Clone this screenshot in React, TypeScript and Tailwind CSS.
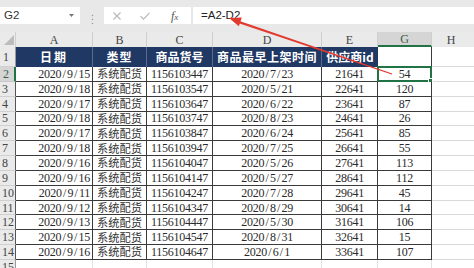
import React from "react";

const rows: string[][] = [
  ["2020/9/15", "1156103447", "2020/7/23", "21641", "54"],
  ["2020/9/18", "1156103547", "2020/5/21", "22641", "120"],
  ["2020/9/17", "1156103647", "2020/6/22", "23641", "87"],
  ["2020/9/18", "1156103747", "2020/8/23", "24641", "26"],
  ["2020/9/17", "1156103847", "2020/6/24", "25641", "85"],
  ["2020/9/18", "1156103947", "2020/7/25", "26641", "55"],
  ["2020/9/16", "1156104047", "2020/5/26", "27641", "113"],
  ["2020/9/16", "1156104147", "2020/5/27", "28641", "112"],
  ["2020/9/11", "1156104247", "2020/7/28", "29641", "45"],
  ["2020/9/12", "1156104347", "2020/8/29", "30641", "14"],
  ["2020/9/13", "1156104447", "2020/5/30", "31641", "106"],
  ["2020/9/15", "1156104547", "2020/8/31", "32641", "15"],
  ["2020/9/16", "1156104647", "2020/6/1", "33641", "107"],
];

function DateText({ v }: { v: string }) {
  const parts = v.split("/");
  return (
    <span>
      {parts.map((p, i) => (
        <React.Fragment key={i}>
          {i > 0 && <span className="inline-block w-[5.75px] text-center">/</span>}
          {p}
        </React.Fragment>
      ))}
    </span>
  );
}

export default function App() {
  return (
    <div className="relative w-[474px] h-[268px] overflow-hidden bg-white font-['Liberation_Serif','Noto_Sans_CJK_SC',serif] text-[#2a2a2a]">
      {/* formula bar */}
      <div className="flex h-[32px] bg-[#e8e8e8] pt-[7px]">
        <div className="flex h-[17px] w-[80px] items-center bg-white pl-[4px] font-['Liberation_Sans',sans-serif] text-[11.5px] text-[#333]">
          <span>G2</span>
          <svg className="ml-auto mr-[6px]" width="5" height="3" viewBox="0 0 5 3">
            <path d="M0 0H5L2.5 3Z" fill="#777" />
          </svg>
        </div>
        <div className="flex w-[24px] items-center justify-center">
          <svg width="3" height="11" viewBox="0 0 3 11">
            <circle cx="1.5" cy="1.5" r="0.8" fill="#a0a0a0" />
            <circle cx="1.5" cy="5.5" r="0.8" fill="#a0a0a0" />
            <circle cx="1.5" cy="9.5" r="0.8" fill="#a0a0a0" />
          </svg>
        </div>
        <div className="flex h-[17px] w-[87px] items-center bg-white">
          <svg className="ml-[9px]" width="8" height="8" viewBox="0 0 8 8">
            <path d="M0.5 0.5L7.5 7.5M7.5 0.5L0.5 7.5" stroke="#b8b8b8" strokeWidth="1.1" />
          </svg>
          <svg className="ml-[19px]" width="10" height="8" viewBox="0 0 10 8">
            <path d="M0.5 4.2L3.5 7.2L9.5 0.8" stroke="#b8b8b8" strokeWidth="1.1" fill="none" />
          </svg>
          <span className="ml-[21px] font-['Liberation_Serif',serif] italic text-[12px] leading-none text-[#555]">
            f<span className="text-[9px]">x</span>
          </span>
        </div>
        <div className="ml-[2px] flex h-[17px] flex-1 items-center bg-white pl-[8px] font-['Liberation_Sans',sans-serif] text-[11.5px] text-[#222]">
          =A2-D2
        </div>
      </div>

      {/* column headers */}
      <div className="flex h-[15px] bg-[#eaeaea] text-[12px] leading-none text-[#444]">
        <div className="relative w-[16px] shrink-0 border-r border-[#cfcfcf]">
          <svg className="absolute left-[4px] top-[3px]" width="10" height="10" viewBox="0 0 10 10">
            <path d="M10 0V10H0Z" fill="#bcbcbc" />
          </svg>
        </div>
        <div className="flex w-[77px] shrink-0 items-center justify-center border-r border-[#cfcfcf]">A</div>
        <div className="flex w-[54px] shrink-0 items-center justify-center border-r border-[#cfcfcf]">B</div>
        <div className="flex w-[66px] shrink-0 items-center justify-center border-r border-[#cfcfcf]">C</div>
        <div className="flex w-[109px] shrink-0 items-center justify-center border-r border-[#cfcfcf]">D</div>
        <div className="flex w-[56px] shrink-0 items-center justify-center border-r border-[#cfcfcf]">E</div>
        <div className="flex w-[54px] shrink-0 items-center justify-center border-r border-b-2 border-r-[#cfcfcf] border-b-[#217346] bg-[#d5d5d5] text-[#3e5f49]">G</div>
        <div className="flex flex-1 items-center justify-center pr-[4px]">H</div>
      </div>

      {/* row 1 */}
      <div className="flex h-[20px] text-[12px] font-bold leading-none text-white">
        <div className="flex w-[16px] shrink-0 items-center border-r border-b border-r-[#9a9a9a] border-b-[#d0d0d0] bg-[#eaeaea] pl-[3px] font-normal text-[#444]">1</div>
        <div className="flex w-[77px] shrink-0 items-center justify-center border-r border-[#5a6a8c] bg-[#1f3864] font-['Noto_Sans_CJK_SC',sans-serif] tracking-[2px]">日期</div>
        <div className="flex w-[54px] shrink-0 items-center justify-center border-r border-[#5a6a8c] bg-[#1f3864] font-['Noto_Sans_CJK_SC',sans-serif] tracking-[1px]">类型</div>
        <div className="flex w-[66px] shrink-0 items-center justify-center border-r border-[#5a6a8c] bg-[#1f3864] font-['Noto_Sans_CJK_SC',sans-serif]">商品货号</div>
        <div className="flex w-[109px] shrink-0 items-center justify-center whitespace-nowrap border-r border-[#5a6a8c] bg-[#1f3864] font-['Noto_Sans_CJK_SC',sans-serif] tracking-[0.5px]">商品最早上架时间</div>
        <div className="flex w-[56px] shrink-0 items-center justify-center whitespace-nowrap bg-[#1f3864] font-['Noto_Sans_CJK_SC',sans-serif]">供应商id</div>
        <div className="w-[54px] shrink-0 border-r border-[#3a3a3a] bg-white"></div>
        <div className="flex-1 border-b border-[#dadada]"></div>
      </div>

      {/* data rows */}
      {rows.map((r, i) => (
        <div key={i} className="flex h-[14.85px] text-[12px] leading-none">
          <div
            className={
              i === 0
                ? "flex w-[16px] shrink-0 items-center border-r-2 border-b border-r-[#217346] border-b-[#c8c8c8] bg-[#d5d5d5] pl-[3px] text-[#3e5f49]"
                : "flex w-[16px] shrink-0 items-center border-r border-b border-r-[#555] border-b-[#d0d0d0] bg-[#eaeaea] pl-[2px] text-[#444]"
            }
          >
            {i + 2}
          </div>
          <div className="flex w-[77px] shrink-0 items-center justify-end border-r border-b border-[#3a3a3a] pr-[2px] tracking-[-0.25px]">
            <DateText v={r[0]} />
          </div>
          <div className="flex w-[54px] shrink-0 items-center justify-center border-r border-b border-[#3a3a3a] font-['Noto_Sans_CJK_SC',sans-serif] text-[11.25px] text-[#333]">
            系统配货
          </div>
          <div className="flex w-[66px] shrink-0 items-center justify-center border-r border-b border-[#3a3a3a] tracking-[-0.25px]">
            {r[1]}
          </div>
          <div className="flex w-[109px] shrink-0 items-center justify-center border-r border-b border-[#3a3a3a] tracking-[-0.25px]">
            <DateText v={r[2]} />
          </div>
          <div className="flex w-[56px] shrink-0 items-center justify-center border-r border-b border-[#3a3a3a] tracking-[-0.25px]">
            {r[3]}
          </div>
          <div className="relative flex w-[54px] shrink-0 items-center justify-center border-r border-b border-[#3a3a3a] tracking-[-0.25px]">
            {r[4]}
            {i === 0 && (
              <div className="absolute -left-[1px] -top-[1px] -right-[1px] -bottom-[1px] border-2 border-[#217346]">
                <div className="absolute -bottom-[3px] -right-[3px] h-[5px] w-[5px] border border-white bg-[#217346]"></div>
              </div>
            )}
          </div>
          <div className="flex-1 border-b border-[#dadada]"></div>
        </div>
      ))}

      {/* row 15 */}
      <div className="flex h-[15px] text-[12px] leading-none">
        <div className="flex w-[16px] shrink-0 items-center border-r border-r-[#9a9a9a] bg-[#eaeaea] pl-[2px] text-[#444]">15</div>
        <div className="w-[77px] shrink-0 border-r border-[#e2e2e2]"></div>
        <div className="w-[54px] shrink-0 border-r border-[#e2e2e2]"></div>
        <div className="w-[66px] shrink-0 border-r border-[#e2e2e2]"></div>
        <div className="w-[109px] shrink-0 border-r border-[#e2e2e2]"></div>
        <div className="w-[56px] shrink-0 border-r border-[#e2e2e2]"></div>
        <div className="w-[54px] shrink-0 border-r border-[#e2e2e2]"></div>
        <div className="flex-1"></div>
      </div>

      {/* red arrow overlay */}
      <svg className="pointer-events-none absolute left-0 top-0" width="474" height="268" viewBox="0 0 474 268">
        <polygon points="237.4,20.2 392.2,73.4 391.8,74.6 236.6,22.4" fill="#e23a2f" />
        <polygon points="229,18 241.8,17.6 238.8,26.2" fill="#e23a2f" />
      </svg>
    </div>
  );
}
